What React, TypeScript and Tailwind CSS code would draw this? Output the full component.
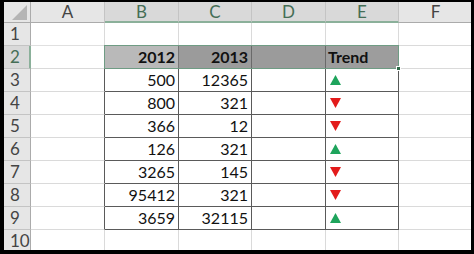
import React from 'react'

const cols = ['A', 'B', 'C', 'D', 'E', 'F']

type Row = { b: string; c: string; trend: 'up' | 'down' }

const data: Row[] = [
  { b: '500', c: '12365', trend: 'up' },
  { b: '800', c: '321', trend: 'down' },
  { b: '366', c: '12', trend: 'down' },
  { b: '126', c: '321', trend: 'up' },
  { b: '3265', c: '145', trend: 'down' },
  { b: '95412', c: '321', trend: 'down' },
  { b: '3659', c: '32115', trend: 'up' },
]

function Arrow({ dir }: { dir: 'up' | 'down' }) {
  return dir === 'up' ? (
    <svg width="11" height="10" viewBox="0 0 11 10">
      <polygon points="5.5,0 11,10 0,10" fill="#1ea45c" />
    </svg>
  ) : (
    <svg width="11" height="10" viewBox="0 0 11 10">
      <polygon points="0,0 11,0 5.5,10" fill="#e31b1b" />
    </svg>
  )
}

export default function App() {
  const font = { fontFamily: 'Lato, "Open Sans", sans-serif' }
  return (
    <div className="w-[474px] h-[254px] bg-black pt-[2px] pl-[4px] pr-[3px] pb-[4px] overflow-hidden" style={font}>
      <div className="relative w-full h-full bg-white overflow-hidden">
        <div className="grid grid-cols-[27px_74px_74px_73px_74px_73px_74px] grid-rows-[21px_repeat(10,23px)] text-[16px] text-[#111]">
          {/* column header row */}
          <div className="relative bg-[#e6e6e6] border-r border-b border-[#ababab]">
            <svg className="absolute right-[3px] bottom-[2px]" width="15" height="15" viewBox="0 0 15 15">
              <polygon points="15,0 15,15 0,15" fill="#b5b5b5" />
            </svg>
          </div>
          {cols.map((c) => {
            const sel = c !== 'A' && c !== 'F'
            return (
              <div
                key={c}
                className={
                  sel
                    ? 'flex items-center justify-center bg-[#d9d9d9] border-r border-[#c4c4c4] border-b-2 border-b-[#8bb09a] text-[17px] text-[#456e56]'
                    : 'flex items-center justify-center bg-[#e6e6e6] border-r border-b border-[#c4c4c4] border-b-[#ababab] text-[17px] text-[#444]'
                }
              >
                {c}
              </div>
            )
          })}

          {/* row 1 */}
          <RowHead n={1} />
          <div className="border-r border-b border-[#dadada] border-b-[#e0e0e0]" />
          <div className="border-r border-b border-[#dadada] border-b-[#5a5a5a]" />
          <div className="border-r border-b border-[#dadada] border-b-[#5a5a5a]" />
          <div className="border-r border-b border-[#dadada] border-b-[#5a5a5a]" />
          <div className="border-r border-b border-[#dadada] border-b-[#5a5a5a]" />
          <div className="border-r border-b border-[#dadada]" />

          {/* row 2 */}
          <RowHead n={2} active />
          <div className="border-r border-b border-[#dadada] border-r-[#5a5a5a]" />
          <div className="flex items-center justify-end pr-[3px] bg-[#b9b9b9] border-r border-b border-[#777] font-bold">2012</div>
          <div className="flex items-center justify-end pr-[3px] bg-[#9b9b9b] border-r border-b border-[#6a6a6a] font-bold">2013</div>
          <div className="bg-[#9b9b9b] border-r border-b border-[#6a6a6a]" />
          <div className="flex items-center pl-[2px] bg-[#9d9d9d] border-r border-b border-[#6a6a6a] font-bold">Trend</div>
          <div className="border-r border-b border-[#dadada]" />

          {data.map((r, i) => (
            <React.Fragment key={i}>
              <RowHead n={i + 3} />
              <div className="border-r border-b border-[#dadada] border-r-[#5a5a5a]" />
              <div className="flex items-center justify-end pr-[3px] border-r border-b border-[#5a5a5a]">{r.b}</div>
              <div className="flex items-center justify-end pr-[3px] border-r border-b border-[#5a5a5a]">{r.c}</div>
              <div className="border-r border-b border-[#5a5a5a]" />
              <div className="flex items-center pl-[4px] border-r border-b border-[#5a5a5a]">
                <Arrow dir={r.trend} />
              </div>
              <div className="border-r border-b border-[#dadada]" />
            </React.Fragment>
          ))}

          {/* row 10 */}
          <RowHead n={10} />
          {cols.map((c) => (
            <div key={c} className="border-r border-b border-[#dadada]" />
          ))}
        </div>

        {/* selection B2:E2 */}
        <div className="absolute left-[100px] top-[43px] w-[295px] h-[24px] border border-[#6f9c84]" />
        <div className="absolute left-[392px] top-[64px] w-[5px] h-[5px] bg-[#2f6a48] border border-white" />
      </div>
    </div>
  )
}

function RowHead({ n, active }: { n: number; active?: boolean }) {
  return (
    <div
      className={
        active
          ? 'flex items-center pl-[6px] bg-[#d9d9d9] border-b border-[#c4c4c4] border-r-2 border-r-[#8bb09a] text-[17px] text-[#456e56]'
          : 'flex items-center pl-[6px] bg-[#e6e6e6] border-b border-r border-[#c4c4c4] border-r-[#ababab] text-[17px] text-[#444]'
      }
    >
      {n}
    </div>
  )
}
